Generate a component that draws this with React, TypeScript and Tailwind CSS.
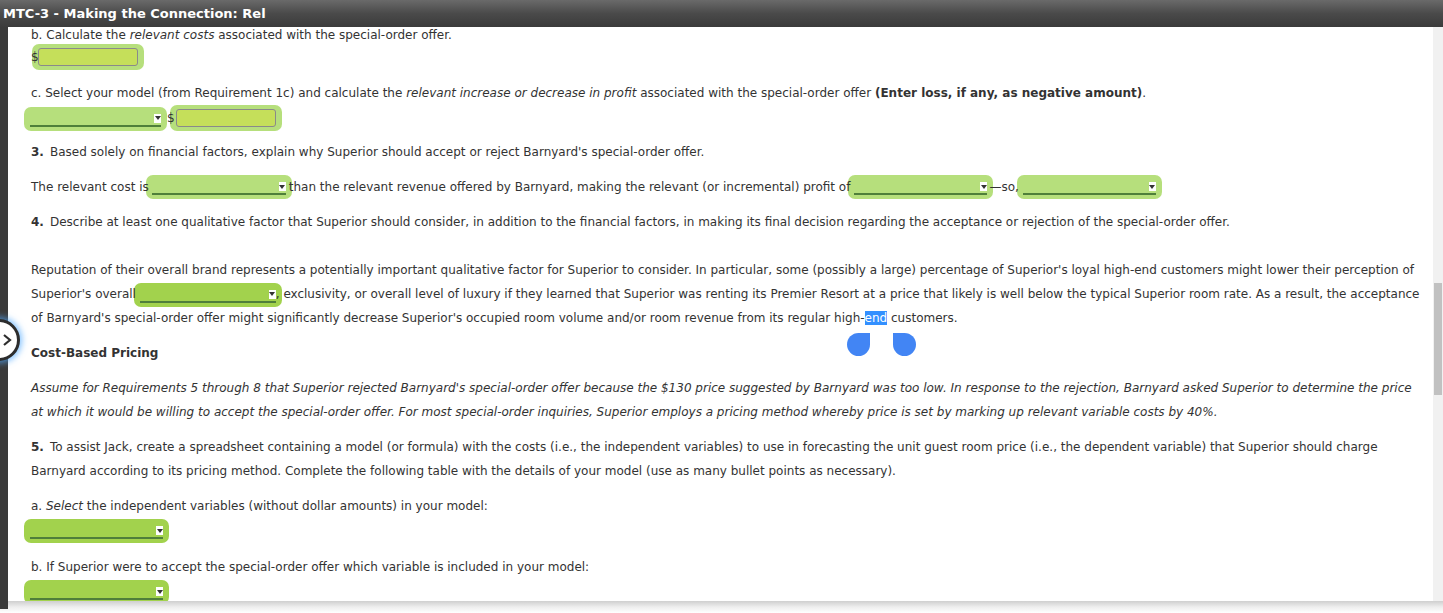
import React from "react";

// green marker stroke drawn behind a form field
function Hl({ children, tone = "bg-[#a9d965]/85", className = "" }: { children: React.ReactNode; tone?: string; className?: string }) {
  return (
    <span className={`relative inline-block align-middle leading-none ${className}`}>
      <span className={`absolute -inset-x-[6px] -inset-y-[4px] -z-10 rounded-[7px] ${tone}`} />
      <span className="relative block">{children}</span>
    </span>
  );
}

function Dropdown({ w }: { w: string }) {
  return (
    <span className={`relative block h-[16px] ${w} border-b-2 border-[#4f7f3a]`}>
      <span className="absolute right-0 top-[3px] flex h-[9px] w-[7px] items-center justify-center bg-white">
        <span className="h-0 w-0 border-x-[3px] border-t-[4px] border-x-transparent border-t-[#333]" />
      </span>
    </span>
  );
}

function Box({ w }: { w: string }) {
  return <span className={`block h-[18px] ${w} rounded-[3px] border border-[#8a8a8a] bg-[#c5df5a]`} />;
}

export default function App() {
  return (
    <div className="relative isolate h-[613px] w-[1443px] overflow-hidden bg-white font-['DejaVu_Sans',Verdana,sans-serif] text-[12px] text-[#333]">
      {/* title bar */}
      <div className="flex h-[27px] items-center bg-gradient-to-b from-[#6a6a6a] via-[#4a4a4a] to-[#3b3b3b] pl-[3px] text-[13px] font-bold text-white">
        MTC-3 - Making the Connection: Rel
      </div>

      <div className="flex h-[576px]">
        <div className="w-[8px] bg-[#3a3a3a]" />
        <div className="flex-1 overflow-hidden pl-[23px] pr-[8px]">
          <p className="h-[16px] leading-[16px]">
            b. Calculate the <i>relevant costs</i> associated with the special-order offer.
          </p>
          <div className="mt-[5px] flex h-[18px] items-center">
            <span className="w-[7px]">$</span>
            <Hl>
              <Box w="w-[100px]" />
            </Hl>
          </div>

          <p className="mt-[19px] h-[16px] leading-[16px]">
            c. Select your model (from Requirement 1c) and calculate the <i>relevant increase or decrease in profit</i> associated with the special-order offer{" "}
            <b>(Enter loss, if any, as negative amount)</b>.
          </p>
          <div className="mt-[7px] flex h-[20px] items-center">
            <span className="ml-[-1px]">
              <Hl>
                <Dropdown w="w-[131px]" />
              </Hl>
            </span>
            <span className="ml-[6px] w-[9px]">$</span>
            <Hl>
              <Box w="w-[100px]" />
            </Hl>
          </div>

          <p className="mt-[16px] h-[16px] leading-[16px]">
            <b className="mr-[6px]">3.</b>Based solely on financial factors, explain why Superior should accept or reject Barnyard's special-order offer.
          </p>
          <div className="mt-[17px] flex h-[20px] items-center whitespace-nowrap">
            <span className="mr-[3px]">The relevant cost is</span>
            <Hl>
              <Dropdown w="w-[134px]" />
            </Hl>
            <span className="ml-[3px] mr-[4px]">than the relevant revenue offered by Barnyard, making the relevant (or incremental) profit of</span>
            <Hl>
              <Dropdown w="w-[133px]" />
            </Hl>
            <span className="ml-[2px] mr-[4px]">—so,</span>
            <Hl>
              <Dropdown w="w-[133px]" />
            </Hl>
          </div>

          <p className="mt-[17px] h-[16px] leading-[16px]">
            <b className="mr-[6px]">4.</b>Describe at least one qualitative factor that Superior should consider, in addition to the financial factors, in making its final decision regarding the acceptance or rejection of the special-order offer.
          </p>

          <p className="mt-[28px] leading-[24px]">
            Reputation of their overall brand represents a potentially important qualitative factor for Superior to consider. In particular, some (possibly a large) percentage of Superior's loyal high-end customers might lower their perception of Superior's overall{" "}
            <Hl tone="bg-[#98cd3a]/90">
              <Dropdown w="w-[136px]" />
            </Hl>
            , exclusivity, or overall level of luxury if they learned that Superior was renting its Premier Resort at a price that likely is well below the typical Superior room rate. As a result, the acceptance of Barnyard's special-order offer might significantly decrease Superior's occupied room volume and/or room revenue from its regular high-<span className="bg-[#3390ff] text-white">end</span> customers.
          </p>

          <p className="mt-[15px] h-[16px] text-[12px] font-bold leading-[16px]">Cost-Based Pricing</p>

          <p className="mt-[15px] italic leading-[24px]">
            Assume for Requirements 5 through 8 that Superior rejected Barnyard's special-order offer because the $130 price suggested by Barnyard was too low. In response to the rejection, Barnyard asked Superior to determine the price at which it would be willing to accept the special-order offer. For most special-order inquiries, Superior employs a pricing method whereby price is set by marking up relevant variable costs by 40%.
          </p>

          <p className="mt-[11px] leading-[24px]">
            <b className="mr-[6px]">5.</b>To assist Jack, create a spreadsheet containing a model (or formula) with the costs (i.e., the independent variables) to use in forecasting the unit guest room price (i.e., the dependent variable) that Superior should charge Barnyard according to its pricing method. Complete the following table with the details of your model (use as many bullet points as necessary).
          </p>

          <p className="mt-[15px] h-[16px] leading-[16px]">
            a. <i>Select</i> the independent variables (without dollar amounts) in your model:
          </p>
          <div className="mt-[8px] flex h-[18px] items-center">
            <Hl tone="bg-[#98cd3a]/90" className="ml-[-1px]">
              <Dropdown w="w-[133px]" />
            </Hl>
          </div>

          <p className="mt-[19px] h-[16px] leading-[16px]">
            b. If Superior were to accept the special-order offer which variable is included in your model:
          </p>
          <div className="mt-[8px] flex h-[18px] items-center">
            <Hl tone="bg-[#98cd3a]/90" className="ml-[-1px]">
              <Dropdown w="w-[133px]" />
            </Hl>
          </div>
        </div>
        {/* scrollbar */}
        <div className="relative w-[10px] bg-[#f1f1f1]">
          <div className="absolute left-[1px] top-[256px] h-[112px] w-[8px] bg-[#c1c1c1]" />
        </div>
      </div>

      {/* bottom edge */}
      <div className="absolute bottom-0 left-0 right-0 h-[12px] bg-gradient-to-b from-[#cfcfcf] via-[#eeeeee] to-white" />
      <div className="absolute bottom-[4px] left-0 h-[8px] w-[8px] bg-[#3a3a3a]" />

      {/* side toggle */}
      <div className="absolute left-[-22px] top-[319px] flex h-[42px] w-[42px] items-center justify-center rounded-full border-[3px] border-[#2d2d2d] bg-white pl-[16px] shadow-[0_0_6px_2px_rgba(80,170,255,0.7)]">
        <svg width="10" height="14" viewBox="0 0 10 14" fill="none" stroke="#2d2d2d" strokeWidth="2.2">
          <path d="M2 2l6 5-6 5" />
        </svg>
      </div>

      {/* selection handles */}
      <div className="absolute left-[847px] top-[333px] h-[23px] w-[23px] rounded-full rounded-tr-none bg-[#4285f4]" />
      <div className="absolute left-[893px] top-[333px] h-[23px] w-[23px] rounded-full rounded-tl-none bg-[#4285f4]" />
    </div>
  );
}
